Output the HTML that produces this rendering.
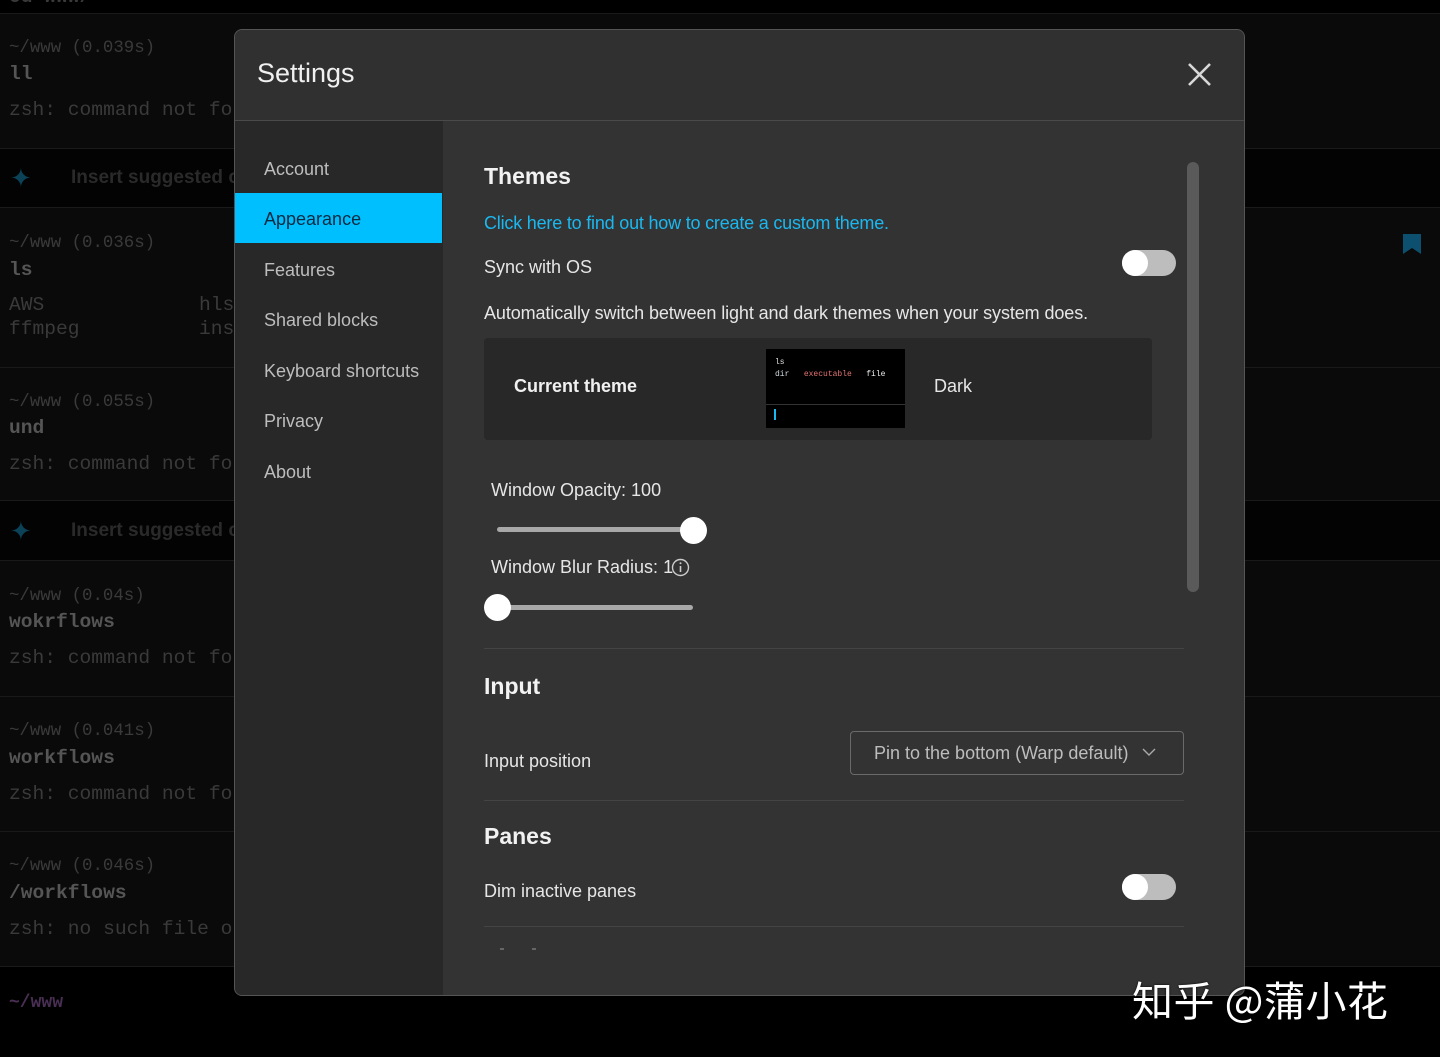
<!DOCTYPE html>
<html><head><meta charset="utf-8"><style>
*{margin:0;padding:0;box-sizing:border-box}
body{width:1440px;height:1057px;background:#000;position:relative;overflow:hidden;font-family:"Liberation Sans",sans-serif}
.a{position:absolute;white-space:nowrap}
.m{font-family:"Liberation Mono","DejaVu Sans Mono",monospace;font-size:19.6px;color:#3a3a3a}
.blk{position:absolute;left:0;width:1440px;background:#0a0a0a;border-top:1px solid #1a1a1a}
.sug{position:absolute;left:0;width:1440px;background:#030303;border-top:1px solid #1a1a1a}
.c{color:#e6e6e6;font-size:18px}
.h{color:#f2f2f2;font-size:23px;font-weight:bold}
.side{color:#bdbdbd;font-size:18px;left:264px}
.tog{position:absolute;width:54px;height:26px;border-radius:13px;background:#bdbdbd}
.tog:before{content:"";position:absolute;left:0;top:0;width:26px;height:26px;border-radius:50%;background:#fff}
.div{position:absolute;left:484px;width:700px;height:1px;background:#444}
</style></head><body>
<div class="blk" style="top:13px;height:135px"></div>
<div class="sug" style="top:148px;height:59px"></div>
<div class="blk" style="top:207px;height:160px"></div>
<div class="blk" style="top:367px;height:133px"></div>
<div class="sug" style="top:500px;height:60px"></div>
<div class="blk" style="top:560px;height:136px"></div>
<div class="blk" style="top:696px;height:135px"></div>
<div class="blk" style="top:831px;height:135px"></div>
<div class="sug" style="top:966px;height:91px;background:#000"></div>
<div class="a m" style="left:9px;top:-14px;font-weight:bold">cd www/</div>
<div class="a m" style="left:9px;top:39px;font-size:17.4px">~/www (0.039s)</div>
<div class="a m" style="left:9px;top:63px;font-weight:bold;color:#555">ll</div>
<div class="a m" style="left:9px;top:99px">zsh: command not found</div>
<div class="a" style="left:10px;top:163px;color:#0c4258;font-size:26px">✦</div>
<div class="a" style="left:71px;top:167px;color:#2a2a2a;font-size:19px;font-weight:bold">Insert suggested command</div>
<div class="a m" style="left:9px;top:234px;font-size:17.4px">~/www (0.036s)</div>
<div class="a m" style="left:9px;top:259px;font-weight:bold;color:#555">ls</div>
<div class="a m" style="left:9px;top:294px">AWS</div><div class="a m" style="left:199px;top:294px">hls</div>
<div class="a m" style="left:9px;top:318px">ffmpeg</div><div class="a m" style="left:199px;top:318px">ins</div>
<div class="a m" style="left:9px;top:393px;font-size:17.4px">~/www (0.055s)</div>
<div class="a m" style="left:9px;top:417px;font-weight:bold;color:#555">und</div>
<div class="a m" style="left:9px;top:453px">zsh: command not found</div>
<div class="a" style="left:10px;top:516px;color:#0c4258;font-size:26px">✦</div>
<div class="a" style="left:71px;top:520px;color:#2a2a2a;font-size:19px;font-weight:bold">Insert suggested command</div>
<div class="a m" style="left:9px;top:587px;font-size:17.4px">~/www (0.04s)</div>
<div class="a m" style="left:9px;top:611px;font-weight:bold;color:#555">wokrflows</div>
<div class="a m" style="left:9px;top:647px">zsh: command not found</div>
<div class="a m" style="left:9px;top:722px;font-size:17.4px">~/www (0.041s)</div>
<div class="a m" style="left:9px;top:747px;font-weight:bold;color:#555">workflows</div>
<div class="a m" style="left:9px;top:783px">zsh: command not found</div>
<div class="a m" style="left:9px;top:857px;font-size:17.4px">~/www (0.046s)</div>
<div class="a m" style="left:9px;top:882px;font-weight:bold;color:#555">/workflows</div>
<div class="a m" style="left:9px;top:918px">zsh: no such file or directory</div>
<div class="a m" style="left:9px;top:993px;color:#4a2f55;font-weight:bold;font-size:18px">~/www</div>
<svg class="a" style="left:1402px;top:233px" width="20" height="22"><path d="M1 1h18v20l-9-6-9 6z" fill="#0c4f6e"/></svg>

<div class="a" style="left:234px;top:29px;width:1011px;height:967px;border:1px solid #555;border-radius:8px;overflow:hidden;background:#333">
 <div class="a" style="left:0;top:0;width:1011px;height:91px;background:#303030;border-bottom:1px solid #4a4a4a"></div>
 <div class="a" style="left:0;top:91px;width:208px;height:880px;background:#282828"></div>
</div>
<div class="a" style="left:257px;top:58px;color:#f0f0f0;font-size:27px">Settings</div>
<svg class="a" style="left:1187px;top:62px" width="25" height="25"><path d="M2 2L23 23M23 2L2 23" stroke="#d8d8d8" stroke-width="2.6"/></svg>
<div class="a" style="left:235px;top:193px;width:207px;height:50px;background:#00bfff"></div>
<div class="a side" style="top:159px">Account</div>
<div class="a side" style="top:209px;color:#0a2a40">Appearance</div>
<div class="a side" style="top:260px">Features</div>
<div class="a side" style="top:310px">Shared blocks</div>
<div class="a side" style="top:361px">Keyboard shortcuts</div>
<div class="a side" style="top:411px">Privacy</div>
<div class="a side" style="top:462px">About</div>

<div class="a" style="left:1187px;top:162px;width:12px;height:430px;border-radius:6px;background:#5a5a5a"></div>
<div class="a h" style="left:484px;top:163px">Themes</div>
<div class="a" style="left:484px;top:213px;color:#1ab8f0;font-size:18px;letter-spacing:-0.2px">Click here to find out how to create a custom theme.</div>
<div class="a c" style="left:484px;top:257px">Sync with OS</div>
<div class="tog" style="left:1122px;top:250px"></div>
<div class="a c" style="left:484px;top:303px;letter-spacing:-0.1px">Automatically switch between light and dark themes when your system does.</div>
<div class="a" style="left:484px;top:338px;width:668px;height:102px;background:#282828;border-radius:4px"></div>
<div class="a" style="left:514px;top:376px;color:#f0f0f0;font-size:18px;font-weight:bold">Current theme</div>
<div class="a" style="left:766px;top:349px;width:139px;height:79px;background:#000">
 <div class="a" style="left:9px;top:9px;color:#ddd;font-size:8px;font-family:'Liberation Mono',monospace">ls</div>
 <div class="a" style="left:9px;top:21px;color:#cfd8dc;font-size:8px;font-family:'Liberation Mono',monospace">dir&nbsp;&nbsp;&nbsp;<span style="color:#e57373">executable</span>&nbsp;&nbsp;&nbsp;<span style="color:#eee">file</span></div>
 <div class="a" style="left:0;top:55px;width:139px;height:1px;background:#333"></div>
 <div class="a" style="left:8px;top:60px;width:2px;height:11px;background:#1ab8f0"></div>
</div>
<div class="a c" style="left:934px;top:376px">Dark</div>
<div class="a c" style="left:491px;top:480px">Window Opacity: 100</div>
<div class="a" style="left:497px;top:527px;width:196px;height:5px;border-radius:3px;background:#a8a8a8"></div>
<div class="a" style="left:680px;top:517px;width:27px;height:27px;border-radius:50%;background:#fff"></div>
<div class="a c" style="left:491px;top:557px">Window Blur Radius: 1</div>
<svg class="a" style="left:671px;top:558px" width="19" height="19"><circle cx="9.5" cy="9.5" r="8" fill="none" stroke="#ccc" stroke-width="1.4"/><path d="M9.5 8v6" stroke="#ccc" stroke-width="1.6"/><circle cx="9.5" cy="5.3" r="1" fill="#ccc"/></svg>
<div class="a" style="left:497px;top:605px;width:196px;height:5px;border-radius:3px;background:#a8a8a8"></div>
<div class="a" style="left:484px;top:594px;width:27px;height:27px;border-radius:50%;background:#fff"></div>
<div class="div" style="top:648px"></div>
<div class="a h" style="left:484px;top:673px">Input</div>
<div class="a c" style="left:484px;top:751px">Input position</div>
<div class="a" style="left:850px;top:731px;width:334px;height:44px;border:1px solid #6a6a6a;border-radius:4px"></div>
<div class="a" style="left:874px;top:743px;color:#bdbdbd;font-size:18px">Pin to the bottom (Warp default)</div>
<svg class="a" style="left:1142px;top:747px" width="14" height="10"><path d="M1 2l6 6 6-6" fill="none" stroke="#aaa" stroke-width="1.4"/></svg>
<div class="div" style="top:800px"></div>
<div class="a h" style="left:484px;top:823px">Panes</div>
<div class="a c" style="left:484px;top:881px">Dim inactive panes</div>
<div class="tog" style="left:1122px;top:874px"></div>
<div class="div" style="top:926px"></div>
<div class="a" style="left:500px;top:948px;width:4px;height:2px;background:#666"></div>
<div class="a" style="left:532px;top:948px;width:4px;height:2px;background:#666"></div>
<div class="a" style="left:1132px;top:968px;color:#fff;font-size:41px;letter-spacing:0.5px;font-family:'Noto Sans CJK SC','WenQuanYi Zen Hei',sans-serif;text-shadow:0 0 2px #000">知乎 @蒲小花</div>
</body></html>
